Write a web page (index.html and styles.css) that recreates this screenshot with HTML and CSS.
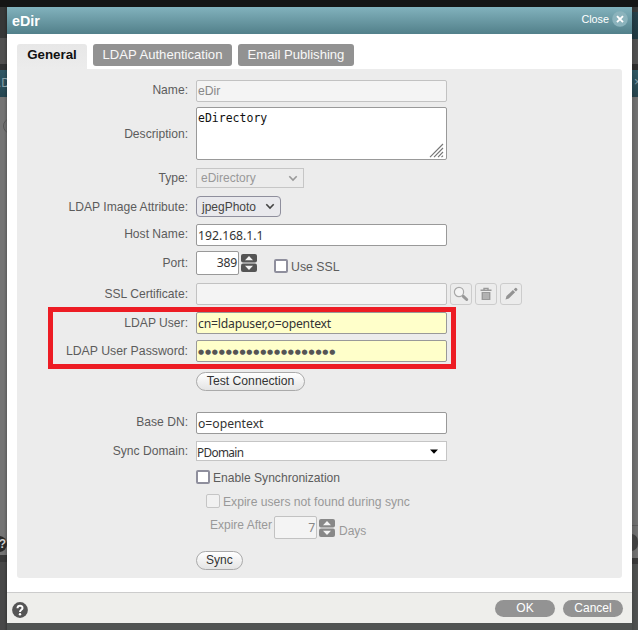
FILE: index.html
```html
<!DOCTYPE html>
<html lang="en">
<head>
<meta charset="utf-8">
<title>eDir</title>
<link rel="stylesheet" href="styles.css">
</head>
<body>
<svg width="0" height="0" class="defs">
  <symbol id="spin" viewBox="0 0 16 18">
    <rect width="16" height="8.4" rx="2"/><rect y="9.6" width="16" height="8.4" rx="2"/>
    <path d="M4 6.3 8 2l4 4.3zM4 11.7 8 16l4-4.3z" fill="#f4f4f4"/>
  </symbol>
  <symbol id="chev" viewBox="0 0 10 7"><path d="m1.3 1.3 3.7 3.8 3.7-3.8" fill="none" stroke="currentColor" stroke-width="1.6"/></symbol>
</svg>
<div class="page">
  <div class="edge left"><span class="behind-title">.D</span><span class="behind-ring"></span><span class="behind-help">?</span></div>
  <main class="dialog">
    <header class="titlebar">
      <h1>eDir</h1>
      <span class="close">Close <svg width="16" height="16" viewBox="0 0 16 16"><circle cx="8" cy="8" r="7.8" fill="#8bb3bc"/><path d="m5 5.2 6 6m0-6-6 6" stroke="#fff" stroke-width="1.9"/></svg></span>
    </header>
    <nav class="tabs">
      <span class="tab active">General</span><span class="tab auth">LDAP Authentication</span><span class="tab email">Email Publishing</span>
    </nav>
    <section class="panel">
      <div class="row name"><label>Name:</label><div class="input disabled sans">eDir</div></div>
      <div class="row desc"><label>Description:</label><div class="input area"><span>eDirectory</span>
        <svg class="grip" width="15" height="15" viewBox="0 0 15 15"><path d="M1 14.2 14 1M5 14.2 14 5M9 14.2 14 9M12.5 14.2 14 12.7" stroke="#777" stroke-width="1.2"/></svg></div></div>
      <div class="row type"><label>Type:</label><div class="select off"><span>eDirectory</span><svg width="10" height="7"><use href="#chev"/></svg></div></div>
      <div class="row image"><label>LDAP Image Attribute:</label><div class="select photo"><span>jpegPhoto</span><svg width="10" height="7"><use href="#chev"/></svg></div></div>
      <div class="row host"><label>Host Name:</label><div class="input">192.168.1.1</div></div>
      <div class="row port"><label>Port:</label><div class="input num">389</div><svg class="spin" width="16" height="18"><use href="#spin"/></svg><i class="check ssl"></i><span class="ssl-text">Use SSL</span></div>
      <div class="row cert"><label>SSL Certificate:</label><div class="input disabled"></div>
        <span class="tool"><svg width="16" height="16" viewBox="0 0 16 16"><circle cx="6" cy="6" r="4.6" fill="#f4f4f4" stroke="#a8a8a8" stroke-width="1.2"/><path d="m10.3 10.3 3.4 3.2" stroke="#999" stroke-width="3" stroke-linecap="round"/></svg></span>
        <span class="tool"><svg width="16" height="16" viewBox="0 0 16 16"><path d="M2.5 4.2h11M6 4V2.4h4V4" fill="none" stroke="#999" stroke-width="1.4"/><path d="M3.6 6h8.8v8H3.6z" fill="#999"/><path d="M6 7v6M8 7v6M10 7v6" stroke="#d8d8d8" stroke-width=".8"/></svg></span>
        <span class="tool"><svg width="16" height="16" viewBox="0 0 16 16"><path d="m2.5 13.5 1-3.4 6.4-6 2.2 2.2-6.3 6.2zM10.7 3.4l1-1a1.3 1.3 0 0 1 2.2 2.2l-1 1z" fill="#939393"/></svg></span></div>
      <div class="row user"><label>LDAP User:</label><div class="input yellow">cn=ldapuser,o=opentext</div></div>
      <div class="row pass"><label>LDAP User Password:</label><div class="input yellow dots">●●●●●●●●●●●●●●●●●●●●</div></div>
      <div class="row test"><span class="pill">Test Connection</span></div>
      <div class="row base"><label>Base DN:</label><div class="input">o=opentext</div></div>
      <div class="row domain"><label>Sync Domain:</label><div class="input combo"><span>PDomain</span><svg width="8" height="5" viewBox="0 0 8 5"><path d="M0 .5h8L4 4.8z"/></svg></div></div>
      <div class="row enable"><i class="check"></i><span>Enable Synchronization</span></div>
      <div class="row expire faded"><i class="check"></i><span>Expire users not found during sync</span></div>
      <div class="row after faded"><span class="after-text">Expire After</span><div class="input disabled num">7</div><svg class="spin" width="16" height="18"><use href="#spin"/></svg><span class="days">Days</span></div>
      <div class="row sync"><span class="pill">Sync</span></div>
      <div class="highlight"></div>
    </section>
    <footer>
      <svg width="16" height="16" viewBox="0 0 16 16"><circle cx="8" cy="8" r="7.9" fill="#555"/><path d="M5.5 6.2C5.6 3 10.6 3 10.5 6.1 10.4 7.8 8 7.7 8 10" fill="none" stroke="#fff" stroke-width="2"/><circle cx="8" cy="12.2" r="1.2" fill="#fff"/></svg>
      <span class="action ok">OK</span><span class="action">Cancel</span>
    </footer>
  </main>
  <div class="edge right"><span class="behind-close">×</span><span class="behind-button"></span></div>
</div>
</body>
</html>
```
FILE: styles.css
```css
* { box-sizing: border-box; }
body { margin: 0; background: #fff; font: 12px "Liberation Sans", sans-serif; color: #5c5c5c; white-space: nowrap; }
.defs { display: block; }
.page { width: 638px; height: 630px; padding-top: 7px; display: grid; grid-template-columns: 7px 625px 6px; background: linear-gradient(#151515 0 7px, #505352 7px); overflow: hidden; }
.edge { position: relative; height: 623px; overflow: hidden; }
.left { background: linear-gradient(90deg, transparent 4px, #0003), linear-gradient(#363737 0 31px, #505050 31px 57px, #303233 57px 63px, #315866 63px, #244550 90px, #747474 90px 548px, #393939 548px 555px, #484848 555px); }
.right { background: linear-gradient(90deg, #0002, transparent), linear-gradient(#393b3b 0 5px, #26424b 5px, #213a42 32px, #535353 32px 57px, #303030 57px 63px, #315b67 63px, #27454e 90px, #747474 90px 518px, #606060 518px 519px, #747474 519px 551px, #3b3b3b 551px 557px, #515352 557px); }
.behind-title { position: absolute; left: -2px; top: 69px; color: #899fa6; }
.behind-ring { position: absolute; left: 3px; top: 111px; width: 16px; height: 16px; border: 1px solid #555; border-radius: 50%; }
.behind-help { position: absolute; left: -9px; top: 529px; width: 16px; height: 16px; padding-right: 1px; border-radius: 50%; background: #292929; color: #ccc; font-weight: bold; text-align: right; line-height: 16px; }
.behind-close { position: absolute; left: 2px; top: 68px; color: #879da3; }
.behind-button { position: absolute; left: -8px; top: 527px; width: 14px; height: 17px; border-radius: 8px; background: #404040; }
.dialog { height: 616px; background: #fff; overflow: hidden; }
.titlebar { height: 27px; padding: 0 4px 0 5px; display: flex; justify-content: space-between; align-items: flex-start; background: linear-gradient(#82b2bd, #52808a); color: #fff; }
h1 { margin: 6px 0 0; font-size: 14.3px; line-height: 16px; }
.close { display: flex; gap: 3px; align-items: center; margin-top: 4px; font-size: 10.8px; line-height: 16px; }
.tabs { display: flex; gap: 6px; height: 35px; padding: 10px 0 0 10px; }
.tab { height: 22px; border-radius: 3px; background: #929292; color: #f8f8f8; font-size: 13.1px; line-height: 22px; text-align: center; }
.active { width: 70px; height: 25px; background: linear-gradient(#e7e7e7, #ececec); color: #111; font-size: 13.3px; font-weight: bold; border-radius: 3px 3px 0 0; }
.auth { width: 139px; }
.email { width: 116px; }
.panel { position: relative; width: 605px; height: 509px; margin-left: 10px; padding-top: 11px; background: #ececec; border-radius: 0 3px 3px 3px; }
.row { display: flex; height: 22px; padding-left: 179px; margin-bottom: 6px; }
.row label { width: 171px; margin: 0 8px 0 -179px; text-align: right; font-size: 12.1px; align-self: center; }
.row.pass label { font-size: 12.3px; }
.input { width: 251px; height: 22px; padding: 1px 1px 0; border: 1px solid #999; border-radius: 2px; background: #fff; color: #333; font: 12.2px/20px "Noto Sans", sans-serif; }
.disabled { background: #f4f4f4; border-color: #c2c2c2; color: #888; }
.sans { padding-top: 0; font-family: "Liberation Sans", sans-serif; }
.row.name { height: 22px; margin-bottom: 5px; }
.row.name label, .row.host label, .row.base label { position: relative; top: -1px; }
.row.desc { height: 53px; margin-bottom: 8px; }
.area { position: relative; height: 53px; padding-top: 0; font: 11.5px/20px "DejaVu Sans Mono", monospace; color: #111; }
.grip { position: absolute; right: 2px; bottom: 1px; }
.row.type { height: 20px; margin-bottom: 8px; }
.select { display: flex; align-items: center; justify-content: space-between; padding: 0 5px; border: 1px solid #8f8f9d; color: #444; }
.off { width: 108px; padding-left: 4px; border-color: #c6c6c6; color: #999; }
.photo { width: 85px; border-radius: 4px; background: #e9e9ed; }
.row.image { height: 21px; margin-bottom: 7px; }
.row.host { margin-bottom: 5px; }
.row.port { height: 24px; margin-bottom: 8px; }
.num { width: 43px; height: 24px; text-align: right; letter-spacing: -.2px; }
.spin { margin: 3px 0 0 2px; fill: #555; }
.check { width: 14px; height: 14px; border: 2px solid #8f8f9d; border-radius: 2px; background: #fff; }
.ssl { margin: 8px 3px 0 17px; }
.ssl-text { padding-top: 9px; font-size: 12.3px; }
.tool { display: grid; place-items: center; width: 22px; height: 22px; margin-left: 3px; border: 1px solid #ccc; border-radius: 3px; }
.row.cert { margin-bottom: 7px; }
.yellow { background: #ffffca; letter-spacing: -.2px; }
.dots { font: 7px/20px "DejaVu Sans", sans-serif; color: #555; letter-spacing: .8px; }
.row.pass { margin-bottom: 10px; }
.pill { height: 19px; padding: 0 10px; border: 1px solid #aaa; border-radius: 10px; background: linear-gradient(#fff, #e4e4e4); color: #333; line-height: 17px; }
.test .pill { width: 109px; padding: 0; font-size: 12.2px; text-align: center; }
.row.test { height: 19px; margin-bottom: 21px; }
.row.base { margin-bottom: 7px; }
.row.domain { height: 20px; margin-bottom: 9px; }
.combo { height: 20px; display: flex; justify-content: space-between; align-items: center; padding: 1px 8px 0 0; border-color: #c5c5c5; border-radius: 0; font-size: 11.8px; letter-spacing: -.65px; }
.row.enable { height: 15px; margin-bottom: 9px; gap: 3px; font-size: 12.1px; }
.row.expire { height: 15px; margin-bottom: 7px; padding-left: 189px; gap: 3px; font-size: 12.15px; }
.enable span, .expire span { padding-top: 1px; }
.faded { color: #999; }
.faded .check { border-color: #c5c5c5; border-width: 1.5px; background: #f1f1f1; }
.row.after { height: 23px; padding-left: 193px; margin-bottom: 12px; }
.after-text { padding-top: 2px; margin-right: 2px; }
.after .num { height: 23px; }
.after .spin { fill: #888; }
.days { margin: 8px 0 0 4px; }
.row.sync { height: 20px; }
.sync .pill { padding: 0 9px; }
.highlight { position: absolute; left: 31px; top: 238px; width: 408px; height: 62px; border: 5px solid #ed1c24; }
footer { height: 31px; margin-top: 14px; padding: 0 9px 0 5px; display: flex; align-items: center; border-top: 1px solid #ccc; background: #eeeeeb; }
.action { width: 60px; height: 17px; margin-left: 8px; border-radius: 9px; background: #939393; color: #fff; text-align: center; line-height: 16px; }
.ok { margin-left: auto; }
footer > svg { margin-top: 4px; }
```
